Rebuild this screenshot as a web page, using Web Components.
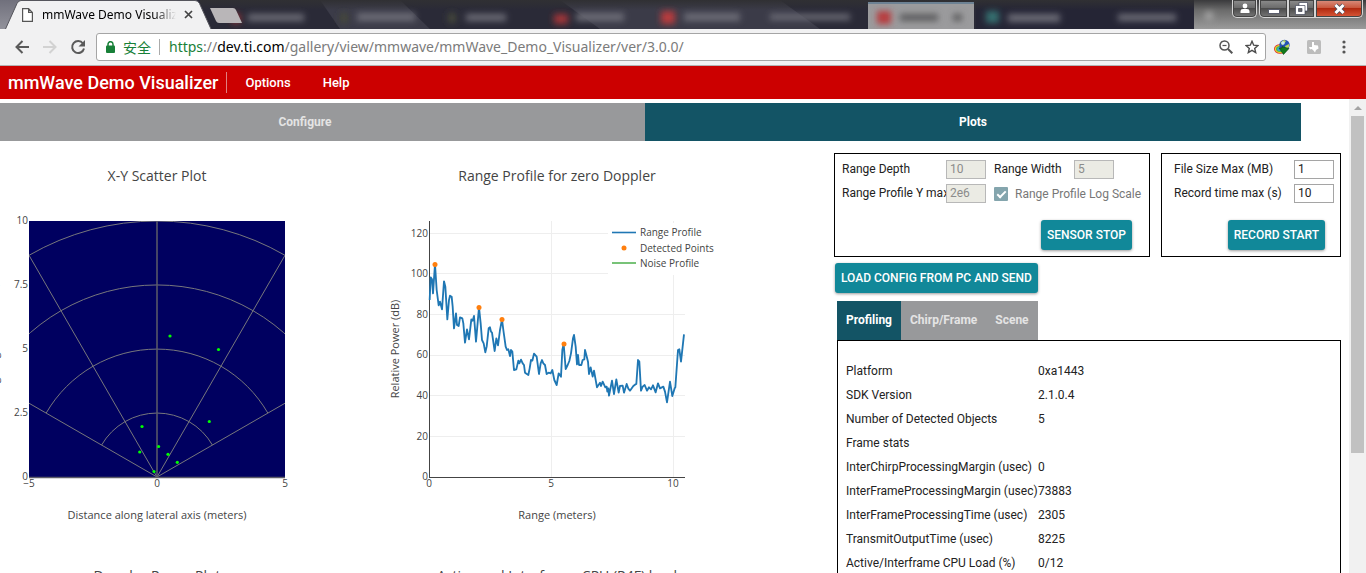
<!DOCTYPE html>
<html lang="en">
<head>
<meta charset="utf-8">
<title>mmWave Demo Visualizer</title>
<style>
  html, body { margin: 0; height: 100%; }
  body { font-family: Roboto, "Noto Sans CJK SC", sans-serif; font-size: 12px; color: #222; background: #fff; }
</style>
</head>
<body>
<mm-window></mm-window>

<script>
const define = (name, markup) => {
  const template = document.createElement('template');
  template.innerHTML = markup;
  customElements.define(name, class extends HTMLElement {
    constructor() {
      super();
      this.attachShadow({ mode: 'open' }).append(template.content.cloneNode(true));
      if (name === 'mm-field') this.fill();
    }
    fill() {
      const input = this.shadowRoot.querySelector('input');
      input.value = this.getAttribute('value') || '';
      input.disabled = this.hasAttribute('disabled');
    }
  });
};

/* ---------- browser chrome ---------- */
define('mm-tab-strip', `
<style>
  :host { display: flex; position: relative; height: 29px; overflow: hidden; background: #2a2a37; flex: none; }
  .backdrop { position: absolute; top: 0; left: 0; }
  .tab { position: relative; display: flex; align-items: center; width: 212px; height: 29px; box-sizing: border-box; padding: 0 18px 0 22px; }
  .shape { position: absolute; top: 0; left: 0; }
  .tab > .doc { position: relative; flex: none; }
  .title { position: relative; flex: 1; margin-left: 9px; overflow: hidden; white-space: nowrap; font: 12px/29px "Noto Sans", sans-serif; color: #000;
    -webkit-mask-image: linear-gradient(to right, #000 84%, transparent); mask-image: linear-gradient(to right, #000 84%, transparent); }
  button { position: relative; border: 0; padding: 0; background: none; display: flex; align-items: center; justify-content: center; }
  .x { width: 12px; height: 28px; margin-left: 6px; }
  .new { width: 32px; height: 29px; align-items: flex-start; margin-left: -2px; }
  .win { position: relative; display: flex; margin-left: auto; margin-right: 3px; height: 18px; }
  .win button { height: 18px; box-sizing: border-box; border: 1px solid #d5d5d5; border-top: 0; background: linear-gradient(#8d8d8d, #6c6c6c 45%, #4c4c4c 50%, #777); box-shadow: inset 0 0 0 1px #444; }
  .user { width: 25px; border-radius: 0 0 5px 5px; margin-right: 2px; }
  .min { width: 29px; border-radius: 0 0 0 5px; }
  .max { width: 27px; }
  .win .close { width: 48px; border-radius: 0 0 5px 0; background: linear-gradient(#d99080, #c9583f 45%, #b12a10 50%, #d9593a); }
</style>
<svg class="backdrop" width="1366" height="29" viewBox="0 0 1366 29" aria-hidden="true">
  <defs>
    <filter id="b" x="-50%" y="-100%" width="200%" height="300%"><feGaussianBlur stdDeviation="3"/></filter>
    <linearGradient id="g" x2="0" y2="1"><stop offset="0" stop-color="#3a3a3c"/><stop offset=".35" stop-color="#6b6b6b"/><stop offset="1" stop-color="#9b9b9b"/></linearGradient>
    <linearGradient id="l" x2="0" y2="1"><stop offset="0" stop-color="#70707c"/><stop offset="1" stop-color="#92929b"/></linearGradient>
    <linearGradient id="t" x2="0" y2="1"><stop offset="0" stop-color="#303033"/><stop offset="1" stop-color="#303033" stop-opacity="0"/></linearGradient>
  </defs>
  <path fill="#3b3b48" d="M320 0h80l30 29h-90zM560 0h220l40 29H600z"/>
  <path fill="#252535" d="M976 0h218v29H976z"/>
  <path fill="url(#t)" d="M200 0h1000v10H200z"/>
  <path fill="url(#l)" d="M0 0h60v29H0z"/>
  <path fill="#9b9b9d" d="M868 3h106v26H868z"/><path fill="#6d8294" d="M868 2h106v2H868z"/>
  <path fill="url(#g)" d="M1194 0h172v29h-172z"/>
  <g filter="url(#b)">
    <g fill="#6c6c76">
      <path d="M248 14h56v7h-56zM357 13h58v8h-58zM466 14h40v7h-40zM576 13h48v8h-48zM684 13h56v8h-56zM770 14h80v6h-80zM1008 14h52v8h-52zM1118 14h58v7h-58z"/>
    </g>
    <path fill="#a03438" d="M232 14h8v9h-8zM554 14h14v10h-14z"/>
    <path fill="#b83a3c" d="M661 11h14v13h-14zM877 11h14v13h-14z"/>
    <path fill="#35706f" d="M986 11h13v12h-13z"/>
    <path fill="#45473b" d="M340 13h8v10h-8zM448 13h8v10h-8z"/>
    <path fill="#5b5b5d" d="M900 14h38v7h-38zM953 14h9v7h-9z"/>
    <path fill="#a5a5a5" d="M1205 12h8v8h-8z"/>
  </g>
</svg>
<div class="tab" role="tab" aria-selected="true">
  <svg class="shape" width="212" height="29" viewBox="0 0 212 29" aria-hidden="true"><path fill="#f1f1f2" stroke="#55555c" d="M5.500 29 17 3.500Q18.500.5 21 .5H195q3 0 4.500 3L211 29"/></svg>
  <svg class="doc" width="11" height="14" viewBox="0 0 11 14" aria-hidden="true"><path fill="#fff" stroke="#555" stroke-width="1.200" d="M.6.6h6l3.800 3.800v9H.6zM6.600.6v3.800h3.800"/></svg>
  <span class="title">mmWave Demo Visualizer</span>
  <button class="x" aria-label="Close tab"><svg width="9" height="9" viewBox="0 0 9 9"><path stroke="#444" stroke-width="1.700" d="m1 1 7 7M8 1 1 8"/></svg></button>
</div>
<button class="new" aria-label="New tab"><svg width="32" height="24" viewBox="0 0 32 24"><path fill="#b9b6b8" d="M0 8h23q2 0 3 2l6 13H9q-2 0-3-2z"/></svg></button>
<div class="win">
  <button class="user" aria-label="Profile"><svg width="10" height="11" viewBox="0 0 10 11"><circle cx="5" cy="3" r="2.400" fill="#fff"/><path fill="#fff" d="M.5 10V8q0-2 2.500-2h4q2.500 0 2.500 2v2z"/></svg></button>
  <button class="min" aria-label="Minimize"><svg width="12" height="12" viewBox="0 0 12 12"><path fill="#fff" stroke="#44485a" stroke-width=".8" d="M.5 6.500h11v4H.5z"/></svg></button>
  <button class="max" aria-label="Restore"><svg width="13" height="13" viewBox="0 0 13 13"><path fill="#fff" stroke="#44485a" stroke-width=".7" fill-rule="evenodd" d="M4 .5h8.500v8.500H10v3.500H.5V3.500H4z"/><path fill="#666" stroke="#44485a" stroke-width=".7" d="M3.500 6.500h3.500v3H3.500z"/><path fill="none" stroke="#44485a" stroke-width=".7" d="M4 3.500h6V9"/></svg></button>
  <button class="close" aria-label="Close"><svg width="13" height="12" viewBox="0 0 13 12"><path stroke="#44485a" stroke-width="4.500" d="m2.500 2 8 8M10.500 2l-8 8"/><path stroke="#fff" stroke-width="3" d="m2.500 2 8 8M10.500 2l-8 8"/></svg></button>
</div>
`);

define('mm-toolbar', `
<style>
  :host { display: flex; align-items: center; height: 37px; box-sizing: border-box; border-bottom: 1px solid #b3b3b3; background: #f1f1f2; padding: 0 16px 0 14px; flex: none; }
  button { display: flex; border: 0; padding: 0; background: none; flex: none; }
  .nav { display: flex; gap: 12px; margin-right: 10px; }
  .box { flex: 1; display: flex; align-items: center; height: 28px; box-sizing: border-box; border: 1px solid #a5a5a5; border-radius: 3px; background: #fff; padding: 0 6px 0 9px; min-width: 0; }
  .safe { font: 14px/16px "Noto Sans CJK SC", sans-serif; color: #188038; margin-left: 8px; padding-right: 8px; border-right: 1px solid #aaa; height: 16px; }
  .url { flex: 1; margin-left: 9px; font: 14px/26px "Noto Sans", sans-serif; color: #7b7b7b; white-space: nowrap; overflow: hidden; }
  .url b { font-weight: 400; color: #188038; }
  .url i { font-style: normal; color: #000; }
  .tools { display: flex; gap: 12px; }
  .ext { display: flex; align-items: center; gap: 17px; margin-left: 8px; }
</style>
<div class="nav">
  <button aria-label="Back"><svg width="16" height="16" viewBox="0 0 16 16"><path fill="none" stroke="#5a5a5a" stroke-width="2" d="M15 8H2.500M8.500 2l-6 6 6 6"/></svg></button>
  <button aria-label="Forward" disabled><svg width="16" height="16" viewBox="0 0 16 16"><path fill="none" stroke="#d2d2d2" stroke-width="2" d="M1 8h12.500M7.500 2l6 6-6 6"/></svg></button>
  <button aria-label="Reload"><svg width="16" height="16" viewBox="0 0 16 16"><path fill="none" stroke="#5a5a5a" stroke-width="2" d="M13 4.500A6 6 0 1 0 14 9.500"/><path fill="#5a5a5a" d="M15 1v6.500H8.500z"/></svg></button>
</div>
<div class="box">
  <svg width="9" height="12" viewBox="0 0 9 12" aria-hidden="true"><rect y="4.500" width="9" height="7.500" rx="1" fill="#188038"/><path fill="none" stroke="#188038" stroke-width="1.500" d="M2 5V3.200a2.500 2.500 0 0 1 5 0V5"/></svg>
  <span class="safe" lang="zh-CN">安全</span>
  <div class="url" role="textbox" aria-label="Address"><b>https</b>://<i>dev.ti.com</i>/gallery/view/mmwave/mmWave_Demo_Visualizer/ver/3.0.0/</div>
  <div class="tools">
    <button aria-label="Zoom"><svg width="14" height="14" viewBox="0 0 14 14"><circle cx="5.500" cy="5.500" r="4.500" fill="none" stroke="#555" stroke-width="1.500"/><path stroke="#555" stroke-width="2" d="m9 9 4.300 4.300"/><path stroke="#555" stroke-width="1.200" d="M3.500 5.500h4"/></svg></button>
    <button aria-label="Bookmark"><svg width="14" height="14" viewBox="0 0 14 14"><path fill="none" stroke="#4c4c4c" stroke-width="1.400" d="m7 1.300 1.700 3.900 4.200.4-3.200 2.800 1 4.200L7 10.400l-3.700 2.200 1-4.200L1.100 5.600l4.200-.4z"/></svg></button>
  </div>
</div>
<div class="ext">
  <button aria-label="Download manager"><svg width="16" height="16" viewBox="0 0 16 16"><ellipse cx="6" cy="10" rx="6" ry="4.800" fill="#d8352a"/><ellipse cx="6" cy="10" rx="5.200" ry="4" fill="#f3d32e"/><ellipse cx="6" cy="10" rx="4" ry="3" fill="#4cb848"/><ellipse cx="6" cy="10" rx="2.800" ry="2" fill="#35a5dc"/><circle cx="10.500" cy="6" r="5.200" fill="#2553b5"/><path fill="#b8d858" d="M6.500 3.500 10 1l2 1-2 3-2 1zM11 7l4-2v3l-3 2z"/><circle cx="9" cy="4" r="1.700" fill="#c6e9f7"/><path fill="#127a1c" stroke="#0b4510" stroke-width=".6" d="M5 9h3V7.500l3 1 4 1-5.500 6z"/></svg></button>
  <button aria-label="Texas Instruments"><svg width="14" height="14" viewBox="0 0 14 14"><rect width="14" height="14" rx="1.500" fill="#bcbcbc"/><path fill="#fff" d="M5 2h2v3l4 .5.500 3L9 10l-1 2.500L6 10 4.500 9 3 9.500 2 7h3z"/></svg></button>
  <button aria-label="Menu"><svg width="12" height="14" viewBox="0 0 12 14"><g fill="#555"><circle cx="6" cy="2" r="1.600"/><circle cx="6" cy="7" r="1.600"/><circle cx="6" cy="12" r="1.600"/></g></svg></button>
</div>
`);

/* ---------- application ---------- */
define('mm-app-bar', `
<style>
  :host { display: flex; align-items: center; height: 33px; background: #c00; color: #fff; padding: 0 8px; flex: none; }
  h1 { margin: 0; font-size: 18px; font-weight: 500; line-height: 32px; padding-right: 8px; }
  .rule { width: 1px; height: 21px; background: #e08080; margin-right: 2px; }
  a { color: #fff; text-decoration: none; font-size: 13px; font-weight: 500; line-height: 32px; padding: 0 16px; }
</style>
<h1>mmWave Demo Visualizer</h1><span class="rule"></span>
<a href="#options">Options</a><a href="#help">Help</a>
`);

define('mm-main-tabs', `
<style>
  :host { display: grid; grid-template-columns: 645fr 656fr; margin: 4px 48px 0 0; height: 38px; }
  button { border: 0; padding: 0 35px 0 0; background: #98999b; color: #e4e4e4; font: bold 12px/38px Roboto, sans-serif; }
  button[aria-selected=true] { padding: 0; background: #135465; color: #fff; }
</style>
<button role="tab" aria-selected="false">Configure</button><button role="tab" aria-selected="true">Plots</button>
`);

define('mm-button', `
<style>
  :host { display: inline-block; }
  button { display: block; height: 30px; border: 0; border-radius: 3px; padding: 0 6px; background: #118899; color: #fff; font: 500 12px/30px Roboto, sans-serif; white-space: nowrap; box-shadow: 0 1px 3px rgba(0,0,0,.4); }
</style>
<button type="button"><slot></slot></button>
`);

define('mm-field', `
<style>
  :host { display: block; }
  label { display: grid; grid-template-columns: var(--label, 104px) 40px; align-items: center; height: 24px; white-space: nowrap; }
  input { width: 40px; height: 19px; box-sizing: border-box; border: 1px solid #a5a5a5; padding: 0 3px; font: 12px/16px Roboto, sans-serif; color: #222; background: #fff; }
  input:disabled { background: #ebebe4; color: #8b8b8b; border-color: #b8b8b8; }
</style>
<label><slot></slot><input type="text"></label>
`);

define('mm-check', `
<style>
  :host { display: block; }
  label { display: flex; align-items: center; gap: 7px; height: 24px; color: #777; white-space: nowrap; padding-top: 1px; }
  input { appearance: none; width: 14px; height: 14px; margin: 0; border-radius: 1px; background: #84a5ad; position: relative; flex: none; }
  input::after { content: ""; position: absolute; left: 5px; top: 2px; width: 3px; height: 7px; border: solid #fff; border-width: 0 2px 2px 0; transform: rotate(45deg); }
</style>
<label><input type="checkbox" checked disabled><slot></slot></label>
`);

define('mm-box', `
<style>
  :host { display: flex; flex-direction: column; justify-content: space-between; box-sizing: border-box; border: 1px solid #000; height: 104px; }
  .act { display: flex; justify-content: flex-end; padding-bottom: 3px; }
</style>
<div><slot></slot></div><div class="act"><slot name="action"></slot></div>
`);

define('mm-controls', `
<style>
  :host { display: grid; grid-template-columns: 316px 180px; gap: 11px; }
  mm-box { padding: 3px 17px 3px 7px; }
  .row { display: flex; gap: 8px; }
  .w { --label: 80px; }
  .rec { padding: 3px 15px 3px 12px; }
  .rec mm-field { --label: 120px; }
</style>
<mm-box>
  <div class="row"><mm-field value="10" disabled>Range Depth</mm-field><mm-field class="w" value="5" disabled>Range Width</mm-field></div>
  <div class="row"><mm-field value="2e6" disabled>Range Profile Y max</mm-field><mm-check>Range Profile Log Scale</mm-check></div>
  <mm-button slot="action">SENSOR STOP</mm-button>
</mm-box>
<mm-box class="rec">
  <mm-field value="1">File Size Max (MB)</mm-field>
  <mm-field value="10">Record time max (s)</mm-field>
  <mm-button slot="action">RECORD START</mm-button>
</mm-box>
`);

define('mm-stats', `
<style>
  :host { display: block; margin-left: 3px; }
  .tabs { display: flex; height: 39px; }
  .tabs button { border: 0; padding: 0 9px; background: #98999b; color: #e4e4e4; font: bold 12px/39px Roboto, sans-serif; }
  .tabs button[aria-selected=true] { background: #135465; color: #fff; }
  .panel { border: 1px solid #000; padding: 18px 8px; }
  table { border-collapse: collapse; table-layout: fixed; width: 100%; }
  td { padding: 0; height: 24px; line-height: 24px; white-space: nowrap; }
  td:first-child { width: 192px; }
</style>
<div class="tabs" role="tablist">
  <button role="tab" aria-selected="true">Profiling</button><button role="tab">Chirp/Frame</button><button role="tab">Scene</button>
</div>
<div class="panel">
  <table>
    <tr><td>Platform</td><td>0xa1443</td></tr>
    <tr><td>SDK Version</td><td>2.1.0.4</td></tr>
    <tr><td>Number of Detected Objects</td><td>5</td></tr>
    <tr><td>Frame stats</td><td></td></tr>
    <tr><td>InterChirpProcessingMargin (usec)</td><td>0</td></tr>
    <tr><td>InterFrameProcessingMargin (usec)</td><td>73883</td></tr>
    <tr><td>InterFrameProcessingTime (usec)</td><td>2305</td></tr>
    <tr><td>TransmitOutputTime (usec)</td><td>8225</td></tr>
    <tr><td>Active/Interframe CPU Load (%)</td><td>0/12</td></tr>
  </table>
</div>
`);

const chartStyle = `
<style>
  :host { display: block; }
  svg { display: block; font-family: "Open Sans", sans-serif; fill: #444; }
  .title { font-size: 14px; text-anchor: middle; }
  .axis { font-size: 11px; text-anchor: middle; }
  .tick { font-size: 10px; text-anchor: middle; }
  .y { text-anchor: end; }
  .leg { font-size: 10px; }
</style>`;

/* Plot centre is (157,477); one metre is 25.6 units. */
define('mm-scatter-plot', chartStyle + `
<svg width="357" height="400" viewBox="0 141 357 400" role="img" aria-label="X-Y Scatter Plot">
  <clipPath id="c"><path d="M29 221h256v256H29z"/></clipPath>
  <text class="title" x="157" y="181">X-Y Scatter Plot</text>
  <path fill="#000060" d="M29 221h256v257H29z"/>
  <g clip-path="url(#c)" fill="none" stroke="#77777c">
    <path d="M157 477 29 255.300M157 477 285 255.300M157 477 13 394M157 477 301 394M101.600 445a64 64 0 0 1 110.800 0M46.200 413a128 128 0 0 1 221.600 0M-9.300 381a192 192 0 0 1 332.600 0M29 255.300a256 256 0 0 1 256 0"/>
  </g>
  <path stroke="#5c5c68" stroke-width="1.500" d="M157 221v256M29 477.500h256"/>
  <g fill="#0f0">
    <circle cx="170" cy="336" r="1.600"/><circle cx="218.500" cy="349.500" r="1.600"/><circle cx="209.300" cy="421.500" r="1.600"/><circle cx="142" cy="426.500" r="1.600"/><circle cx="158.600" cy="446.500" r="1.600"/><circle cx="139.700" cy="452" r="1.600"/><circle cx="168" cy="454.300" r="1.600"/><circle cx="177.300" cy="462.300" r="1.600"/><circle cx="154" cy="471.500" r="1.600"/>
  </g>
  <g class="tick"><text class="y" x="28" y="224">10</text><text class="y" x="28" y="288">7.5</text><text class="y" x="28" y="352">5</text><text class="y" x="28" y="416">2.5</text><text class="y" x="28" y="480">0</text></g>
  <g class="tick"><text x="29" y="487">−5</text><text x="157" y="487">0</text><text x="285" y="487">5</text></g>
  <text class="axis" x="157" y="519">Distance along lateral axis (meters)</text>
  <text class="axis" transform="translate(-2 349) rotate(-90)">Distance along longitudinal axis (meters)</text>
</svg>
`);

define('mm-range-plot', chartStyle + `
<svg width="400" height="400" viewBox="357 141 400 400" role="img" aria-label="Range Profile for zero Doppler">
  <text class="title" x="557" y="181">Range Profile for zero Doppler</text>
  <path stroke="#eee" d="M429 436.500h256M429 395.500h256M429 355.500h256M429 314.500h256M429 273.500h256M429 233.500h256M551.500 221v256M673.500 221v256"/>
  <path fill="#fff" d="M608 223h108v52H608z"/>
  <path stroke="#444" d="M429.500 221v257M429 477.500h256"/>
  <g transform="translate(380 150) scale(.33333)">
    <path fill="none" stroke="#1f77b4" stroke-width="5.500" stroke-linejoin="round" d="M149 450 152 382 156 388 159 430 165 343 170 420 176 466 180 455 186 478 192 394 196 410 202 508 207 450 210 437 215 440 218 470 222 535 228 490 231 525 236 528 240 502 247 505 250 520 255 578 261 538 267 568 274 508 278 512 282 498 288 575 297 472 302 520 306 570 311 580 316 607 320 590 326 535 330 532 333 545 336 548 344 603 349 565 354 586 360 540 366 508 370 540 377 590 381 600 385 598 390 618 393 600 397 605 402 660 409 658 415 632 418 640 423 629 428 640 432 645 435 668 445 675 449 655 453 630 457 632 462 611 470 620 477 672 482 640 486 630 490 640 495 645 500 672 506 668 512 670 517 660 523 690 530 705 536 670 543 680 547 600 551 582 557 657 563 645 568 633 573 610 579 565 582 555 587 590 591 643 594 615 597 645 604 645 608 630 613 628 615 600 619 615 624 635 627 672 632 652 638 680 642 662 651 712 657 703 660 698 663 708 668 695 676 712 680 710 682 725 685 715 687 737 696 692 702 732 709 688 716 728 720 708 728 707 732 728 740 702 745 716 750 722 760 708 765 704 769 702 774 630 778 635 783 722 788 710 794 705 801 722 807 712 813 718 819 706 827 727 834 700 840 715 850 710 855 725 861 757 870 695 877 738 884 715 886 712 894 600 898 598 903 635 912 553"/>
  </g>
  <g fill="#ff7f0e"><circle cx="435" cy="264.500" r="2.500"/><circle cx="479" cy="307.500" r="2.500"/><circle cx="502" cy="319.500" r="2.500"/><circle cx="564" cy="344" r="2.500"/><circle cx="624" cy="248" r="2.500"/></g>
  <path stroke="#1f77b4" stroke-width="1.600" d="M612 232.500h24"/>
  <path stroke="#2ca02c" stroke-opacity=".8" stroke-width="1.600" d="M612 263h24"/>
  <g class="leg"><text x="640" y="236">Range Profile</text><text x="640" y="252">Detected Points</text><text x="640" y="267">Noise Profile</text></g>
  <g class="tick"><text class="y" x="428" y="237">120</text><text class="y" x="428" y="277">100</text><text class="y" x="428" y="318">80</text><text class="y" x="428" y="358">60</text><text class="y" x="428" y="399">40</text><text class="y" x="428" y="440">20</text><text class="y" x="428" y="480">0</text>
  <text x="429" y="487">0</text><text x="551" y="487">5</text><text x="673" y="487">10</text></g>
  <text class="axis" x="557" y="519">Range (meters)</text>
  <text class="axis" transform="translate(399 349) rotate(-90)">Relative Power (dB)</text>
</svg>
`);

define('mm-doppler-plot', chartStyle + `
<svg width="357" height="400" viewBox="0 541 357 400" role="img" aria-label="Doppler-Range Plot"><text class="title" x="157" y="581">Doppler-Range Plot</text></svg>
`);
define('mm-load-plot', chartStyle + `
<svg width="400" height="400" viewBox="357 541 400 400" role="img" aria-label="CPU load"><text class="title" x="557" y="581">Active and Interframe CPU (R4F) load</text></svg>
`);

define('mm-scrollbar', `
<style>
  :host { display: flex; flex-direction: column; align-items: center; width: 17px; background: #f1f1f1; flex: none; }
  svg { margin: 7px 0 6px; }
  .thumb { width: 13px; height: 71%; background: #c1c1c1; }
</style>
<svg width="8" height="4" viewBox="0 0 8 4" aria-hidden="true"><path fill="#a3a3a3" d="m0 4 4-4 4 4z"/></svg><div class="thumb"></div>
`);

define('mm-window', `
<style>
  :host { display: flex; flex-direction: column; height: 100vh; overflow: hidden; }
  .view { flex: 1; display: flex; min-height: 0; }
  .page { flex: 1; min-width: 0; overflow: hidden; }
  .body { display: flex; }
  .plots { flex: 1; display: grid; grid-template-columns: max-content max-content; }
  aside { flex: none; width: 507px; padding: 12px 8px 0 0; }
  .load { margin: 6px 0 8px 1px; display: block; }
</style>
<mm-tab-strip></mm-tab-strip>
<mm-toolbar></mm-toolbar>
<mm-app-bar></mm-app-bar>
<div class="view">
  <main class="page">
    <mm-main-tabs></mm-main-tabs>
    <div class="body">
      <div class="plots">
        <mm-scatter-plot></mm-scatter-plot><mm-range-plot></mm-range-plot>
        <mm-doppler-plot></mm-doppler-plot><mm-load-plot></mm-load-plot>
      </div>
      <aside>
        <mm-controls></mm-controls>
        <mm-button class="load">LOAD CONFIG FROM PC AND SEND</mm-button>
        <mm-stats></mm-stats>
      </aside>
    </div>
  </main>
  <mm-scrollbar></mm-scrollbar>
</div>
`);
</script>
</body>
</html>
